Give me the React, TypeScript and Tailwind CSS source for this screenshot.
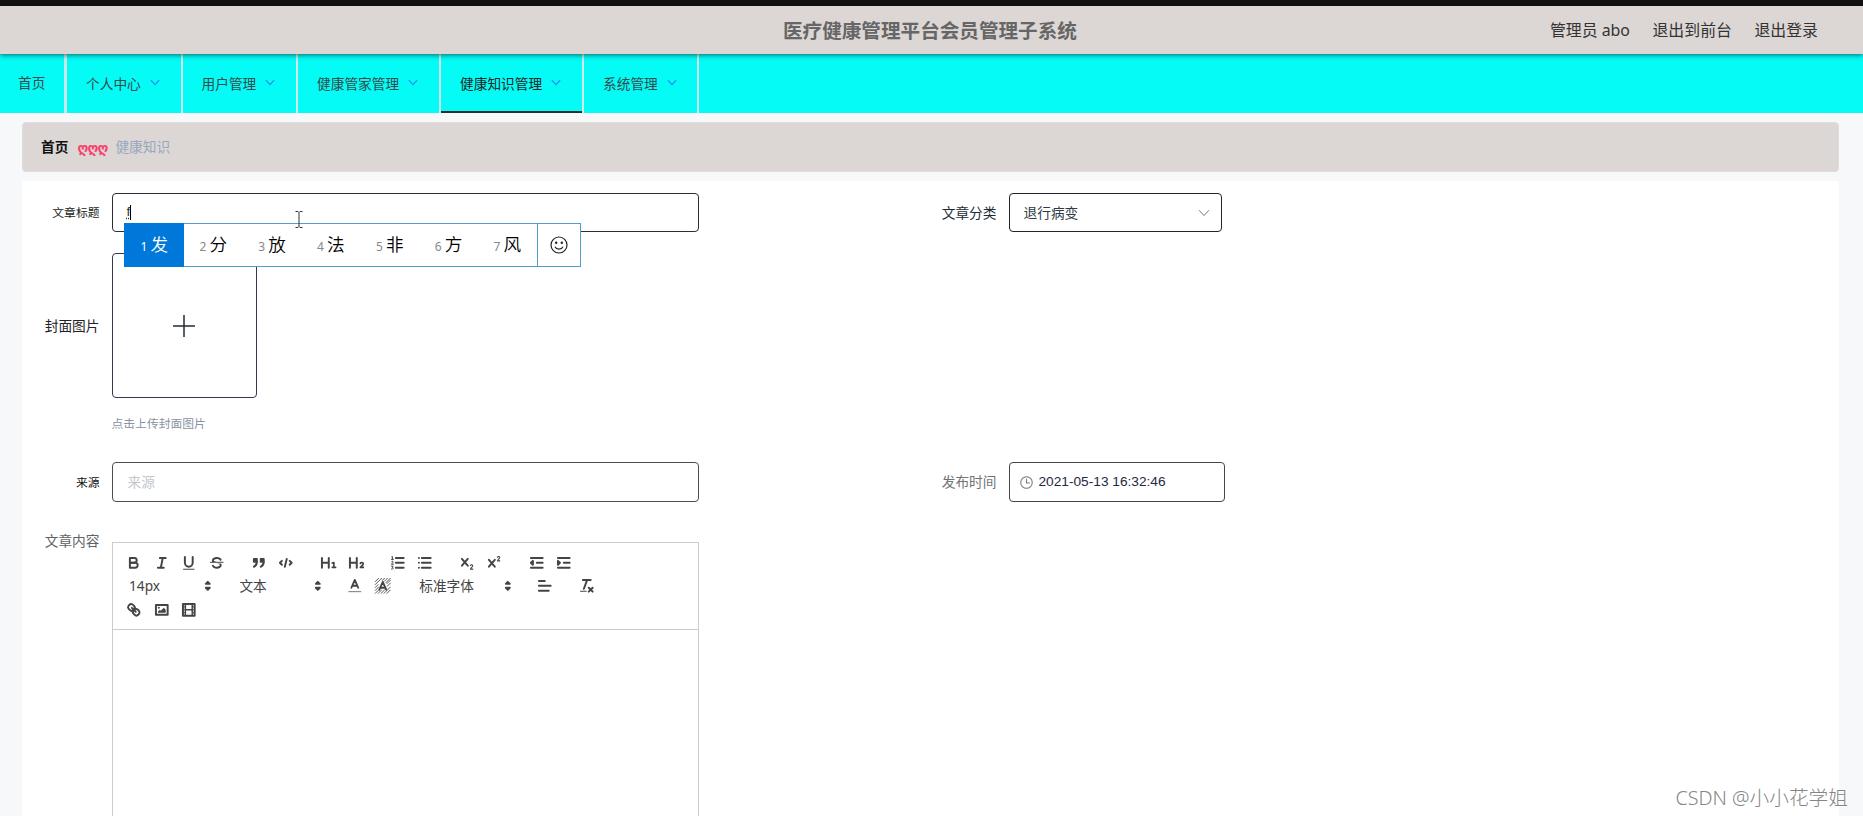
import type { ReactNode } from 'react';
import clsx from 'clsx';

const navItems = [
  { label: '个人中心', width: 'w-[115.5px]' },
  { label: '用户管理', width: 'w-[115.5px]' },
  { label: '健康管家管理', width: 'w-[143px]' },
  { label: '健康知识管理', width: 'w-[143px]', active: true },
  { label: '系统管理', width: 'w-[115px]' },
];

const candidates = ['发', '分', '放', '法', '非', '方', '风'];

function Chevron({ className }: { className?: string }) {
  return (
    <svg viewBox="0 0 12 8" fill="none" stroke="currentColor" className={className}>
      <path d="M1 1.2 6 6.6 11 1.2" />
    </svg>
  );
}

function Header() {
  return (
    <header className="relative z-10 flex h-12 items-center bg-[#dcd6d5] pt-[2px] shadow-[0_1px_5px_rgba(0,0,0,0.6)]">
      <h1 className="ml-[783px] text-[19.6px] font-bold leading-none text-[#666]">医疗健康管理平台会员管理子系统</h1>
      <div className="flex flex-1 justify-end gap-[22.5px] pr-[45px] text-[15.9px] leading-none text-[#333]">
        <span>管理员 abo</span>
        <span>退出到前台</span>
        <span>退出登录</span>
      </div>
    </header>
  );
}

function Nav() {
  return (
    <nav className="flex h-[59px] bg-[#05fbf6] text-[13.7px] text-[#334a4c]">
      <div className="flex w-[67px] items-center border-r-3 border-[#c4e8e6] pl-[18px]">首页</div>
      {navItems.map((item) => (
        <div key={item.label} className={clsx('flex shrink-0 border-r-2 border-[#cdeae8]', item.width)}>
          <div
            className={clsx(
              'flex flex-1 items-center border-b-2 pl-[19px] whitespace-nowrap',
              item.active ? 'border-[#24302f] text-[#1c2626]' : 'border-transparent',
            )}
          >
            <span className="pt-[4px]">{item.label}</span>
            <Chevron className="ml-[9px] h-[7px] w-[10px] stroke-[1.5] text-[#1f8df0]" />
          </div>
        </div>
      ))}
    </nav>
  );
}

function Breadcrumb() {
  return (
    <div className="mt-[9px] flex h-[50px] items-center rounded-[4px] border border-[#e0dcdd] bg-[#dcd6d5] pl-[18.5px] text-[13.7px] leading-none">
      <span className="font-bold text-[#111]">首页</span>
      <span className="ml-[9px] w-[30px] pt-[4px] font-['DejaVu_Sans'] text-[13.3px] font-bold tracking-[-0.8px] whitespace-nowrap text-[#f5416c]">ღღღ</span>
      <span className="ml-[8px] text-[#97a8be]">健康知识</span>
    </div>
  );
}

function Label({ children, className }: { children: ReactNode; className?: string }) {
  return <label className={clsx('shrink-0 pr-3 text-right leading-none', className)}>{children}</label>;
}

function Icon({ children }: { children: ReactNode }) {
  return (
    <span className="flex h-[23.5px] w-[27.4px] items-center justify-center">
      <svg
        viewBox="0 0 18 18"
        className="size-[17.6px]"
        fill="none"
        stroke="#444"
        strokeWidth="2"
        strokeLinecap="round"
        strokeLinejoin="round"
      >
        {children}
      </svg>
    </span>
  );
}

function Group({ children }: { children: ReactNode }) {
  return <span className="mr-[14.7px] flex">{children}</span>;
}

function Picker({ children, className }: { children: ReactNode; className: string }) {
  return (
    <span className={clsx('mr-[14.7px] flex h-[23.5px] items-center justify-between pl-[8.5px] text-[13.7px] leading-none text-[#444]', className)}>
      {children}
      <svg viewBox="0 0 18 18" className="size-[17.6px]" fill="#444" stroke="#444" strokeWidth="2" strokeLinejoin="round">
        <polygon points="7 11 9 13 11 11 7 11" />
        <polygon points="7 7 9 5 11 7 7 7" />
      </svg>
    </span>
  );
}

function Toolbar() {
  return (
    <div className="h-[87px] border-b border-[#ccc] pt-[8px] pl-2">
      <div className="flex">
        <Group>
          <Icon>
            <path d="M5,4H9.5A2.5,2.5,0,0,1,12,6.5v0A2.5,2.5,0,0,1,9.5,9H5A0,0,0,0,1,5,9V4A0,0,0,0,1,5,4Z" />
            <path d="M5,9h5.5A2.5,2.5,0,0,1,13,11.5v0A2.5,2.5,0,0,1,10.5,14H5a0,0,0,0,1,0,0V9A0,0,0,0,1,5,9Z" />
          </Icon>
          <Icon>
            <path d="M7 4H13M5 14H11M8 14 10 4" />
          </Icon>
          <Icon>
            <path d="M5,3V9a4.012,4.012,0,0,0,4,4H9a4.012,4.012,0,0,0,4-4V3" />
            <rect fill="#444" stroke="none" height="1" rx="0.5" width="12" x="3" y="15" />
          </Icon>
          <Icon>
            <path strokeWidth="1" d="M15.5 8.5H2.5" />
            <path fill="#444" stroke="none" d="M9.007,8C6.542,7.791,6,7.519,6,6.5,6,5.792,7.283,5,9,5c1.571,0,2.765.679,2.969,1.309a1,1,0,0,0,1.9-.617C13.356,4.106,11.354,3,9,3,6.2,3,4,4.538,4,6.5a3.2,3.2,0,0,0,.5,1.843Z" />
            <path fill="#444" stroke="none" d="M8.984,10C11.457,10.208,12,10.479,12,11.5c0,0.708-1.283,1.5-3,1.5-1.571,0-2.765-.679-2.969-1.309a1,1,0,1,0-1.9.617C4.644,13.894,6.646,15,9,15c2.8,0,5-1.538,5-3.5a3.2,3.2,0,0,0-.5-1.843Z" />
          </Icon>
        </Group>
        <Group>
          <Icon>
            <rect fill="#444" height="3" width="3" x="4" y="5" />
            <rect fill="#444" height="3" width="3" x="11" y="5" />
            <path fill="#444" d="M7,8c0,4.031-3,5-3,5" />
            <path fill="#444" d="M14,8c0,4.031-3,5-3,5" />
          </Icon>
          <Icon>
            <path d="M5 7 3 9 5 11M13 7 15 9 13 11M10 5 8 13" />
          </Icon>
        </Group>
        <Group>
          <Icon>
            <path d="M3 4V14M10 4V14M10 9H3" />
            <path strokeWidth="1.7" d="M13.6 9.3 15.2 8.7V13.6M13.6 13.7H17" />
          </Icon>
          <Icon>
            <path d="M3 4V14M10 4V14M10 9H3" />
            <path strokeWidth="1.7" d="M13.6 9.6C14 8.3 16.7 8.4 16.6 10 16.5 11.3 14.5 12 13.7 13.7H17" />
          </Icon>
        </Group>
        <Group>
          <Icon>
            <path d="M7 4H15M7 9H15M7 14H15" />
            <path strokeWidth="1" d="M2.5 5.5H4.5M3.5 5.5V2.5L2.8 2.8M2.5 8C3 7 4.5 7.3 4.3 8.3L2.5 10.5H4.5M2.5 12.5H4.2L3.5 13.9C5 14 4.8 15.7 2.5 15.4" />
          </Icon>
          <Icon>
            <path d="M6 4H15M6 9H15M6 14H15M3 4H3M3 9H3M3 14H3" />
          </Icon>
        </Group>
        <Group>
          <Icon>
            <path d="M4 5 10 12M10 5 4 12" />
            <path strokeWidth="1.1" d="M12.7 11.8C13.2 10.5 15.2 10.9 15 12.2 14.9 13.3 13.2 14 12.7 15.5H15.2" />
          </Icon>
          <Icon>
            <path d="M4 6 10 13M10 6 4 13" />
            <path strokeWidth="1.1" d="M12.7 3.3C13.2 2 15.2 2.4 15 3.7 14.9 4.8 13.2 5.5 12.7 7H15.2" />
          </Icon>
        </Group>
        <Group>
          <Icon>
            <path d="M3 14H15M3 4H15M9 9H15" />
            <path fill="#444" d="M5 7V11L3 9Z" />
          </Icon>
          <Icon>
            <path d="M3 14H15M3 4H15M9 9H15" />
            <path fill="#444" d="M3 7V11L5 9Z" />
          </Icon>
        </Group>
      </div>
      <div className="flex">
        <Picker className="w-[95.7px] font-['Noto_Sans']">14px</Picker>
        <Picker className="w-[95.7px]">文本</Picker>
        <Group>
          <Icon>
            <path strokeWidth="1" stroke="#777" d="M3 15H15" strokeLinecap="square" />
            <path strokeWidth="1.9" d="M5.5 11 9 3 12.5 11M6.8 9H11.2" />
          </Icon>
          <Icon>
            <path
              strokeWidth="0.9"
              strokeLinecap="butt"
              d="M1 5 5 1M1 8 8 1M1 11 4.5 7.5M8 4 11 1M1 14 5 10M10.5 4.5 14 1M1 17 5 13M12 6 17 1M4 17 8 13M13 7 17 3M7 17 11 13M13.5 9.5 17 6M10 17 17 10M13 17 17 13"
            />
            <path strokeWidth="1.9" d="M5.5 13 9 5 12.5 13M6.8 11H11.2" />
          </Icon>
        </Group>
        <Picker className="w-[105.5px]">标准字体</Picker>
        <Group>
          <Icon>
            <path d="M3 9H15M3 14H13M3 4H9" />
          </Icon>
        </Group>
        <Icon>
          <path d="M5 3H13M6 12 9.4 3M11 11 15 15M15 11 11 15" />
          <rect fill="#444" stroke="none" height="1" rx="0.5" width="7" x="2" y="14" />
        </Icon>
      </div>
      <div className="flex">
        <Icon>
          <path d="M7 7 11 11" />
          <path d="M8.9,4.577a3.476,3.476,0,0,1,.36,4.679A3.476,3.476,0,0,1,4.577,8.9C3.185,7.5,2.035,6.4,4.217,4.217S7.5,3.185,8.9,4.577Z" />
          <path d="M13.423,9.1a3.476,3.476,0,0,0-4.679-.36,3.476,3.476,0,0,0,.36,4.679c1.392,1.392,2.5,2.542,4.679.36S14.815,10.5,13.423,9.1Z" />
        </Icon>
        <Icon>
          <rect height="10" width="12" x="3" y="4" />
          <circle fill="#444" stroke="none" cx="6" cy="7" r="1" />
          <path fill="#444" stroke="none" d="M5 12V11L7 9 8 10 11 7 13 9V12Z" />
        </Icon>
        <Icon>
          <rect height="12" width="12" x="3" y="3" />
          <path strokeLinecap="butt" d="M5.5 3V15M12.5 3V15M6 9H12" strokeWidth="1.5" />
          <path strokeLinecap="butt" strokeWidth="1" d="M3 6H5.5M3 9H5.5M3 12H5.5M12.5 6H15M12.5 9H15M12.5 12H15" />
        </Icon>
      </div>
    </div>
  );
}

// Pinyin candidate window floating under the title field
function CandidateBar() {
  return (
    <div className="absolute top-[29px] left-[11px] z-20 flex h-[44px] w-[457px] border border-[#4f9fc6] bg-white">
      {candidates.map((char, i) => (
        <div
          key={char}
          className={clsx(
            'flex shrink-0 items-center leading-none',
            i === 0 ? '-my-px -ml-px w-[60px] bg-[#0078d9] pl-[17px] text-white' : 'w-[58.8px] pl-[16px] text-black',
          )}
        >
          <span className={clsx("w-[10px] pt-[4px] font-['Noto_Sans'] text-[12px]", i > 0 && 'text-[#888]')}>{i + 1}</span>
          <span className="text-[17.6px] font-[350]">{char}</span>
        </div>
      ))}
      <div className="ml-auto flex w-[43px] items-center justify-center border-l border-[#4f9fc6]">
        <svg viewBox="0 0 18 18" className="size-[18px]" fill="none" stroke="#222" strokeWidth="1.2">
          <circle cx="9" cy="9" r="8" />
          <path d="M5 10.8C6.5 14 11.5 14 13 10.8" />
          <circle cx="6.2" cy="6.7" r="0.6" fill="#222" />
          <circle cx="11.8" cy="6.7" r="0.6" fill="#222" />
        </svg>
      </div>
    </div>
  );
}

function ArticleForm() {
  return (
    <main className="mt-[9px] flex-1 bg-white pt-3 text-[13.7px]">
      <div className="flex h-[39px] items-center">
        <Label className="w-[90px] pt-px text-[11.8px] text-[#222]">文章标题</Label>
        <div className="relative flex h-[39px] w-[587.5px] items-center rounded-[4px] border border-[#2c2c38] pl-[14px]">
          <span className="font-['Liberation_Sans'] text-[#333] underline decoration-dotted underline-offset-2">f</span>
          <span className="h-[15px] w-px bg-black" />
          <svg viewBox="0 0 8 17" className="absolute top-[17px] left-[182px] z-30 h-[17px] w-2" fill="none" stroke="#333">
            <path d="M.5 .5H3L4 1.5 5 .5H7.5M4 1.5V15.5M.5 16.5H3L4 15.5 5 16.5H7.5" />
          </svg>
          <CandidateBar />
        </div>
        <Label className="w-[309.5px] text-[#222b33]">文章分类</Label>
        <div className="flex h-[39px] w-[213px] items-center justify-between rounded-[4px] border border-[#22222c] pr-[11px] pl-[14px] text-[#2f3b45]">
          <span className="pt-[2px]">退行病变</span>
          <Chevron className="h-[8px] w-[12px] text-[#777]" />
        </div>
      </div>

      <div className="mt-[21px] flex h-[145px] items-center">
        <Label className="w-[90px] text-[#222]">封面图片</Label>
        <div className="flex size-[145px] items-center justify-center rounded-[4px] border border-[#33384c]">
          <svg viewBox="0 0 22 22" className="size-[22px]" stroke="#222c30" strokeWidth="1.5">
            <path d="M11 0V22M0 11H22" />
          </svg>
        </div>
      </div>
      <p className="mt-[19px] ml-[90px] text-[11.8px] leading-[12px] text-[#8793a3]">点击上传封面图片</p>

      <div className="mt-[33px] flex h-10 items-center">
        <Label className="w-[90px] pt-px text-[11.8px] text-[#111]">来源</Label>
        <div className="flex h-10 w-[587.5px] items-center rounded-[4px] border border-[#4c4c52] pl-[15px] text-[#c3c7ce]">来源</div>
        <Label className="w-[309.5px] text-[#707276]">发布时间</Label>
        <div className="flex h-10 w-[216px] items-center rounded-[4px] border border-[#44444e] pl-[10px]">
          <svg viewBox="0 0 14 14" className="size-[13px]" fill="none" stroke="#777" strokeWidth="1.1">
            <circle cx="7" cy="7" r="6.2" />
            <path d="M7 3V7.5H10.5" />
          </svg>
          <span className="ml-[6px] pt-px font-['Liberation_Sans'] text-[#1f2940]">2021-05-13 16:32:46</span>
        </div>
      </div>

      <div className="mt-10 flex">
        <Label className="-mt-2 w-[90px] text-[#606266]">文章内容</Label>
        <div className="h-[274px] w-[587.5px] border border-b-0 border-[#ccc]">
          <Toolbar />
        </div>
      </div>
    </main>
  );
}

export default function App() {
  return (
    <div className="relative flex h-[816px] w-[1863px] flex-col overflow-hidden bg-[#f6f8fa] font-['Noto_Sans','Noto_Sans_CJK_SC',sans-serif]">
      <div className="h-[6px] shrink-0 bg-[#111]" />
      <Header />
      <Nav />
      <div className="flex flex-1 flex-col pr-6 pl-[21.5px]">
        <Breadcrumb />
        <ArticleForm />
      </div>
      <div className="absolute right-[15px] bottom-[7px] text-[19.7px] leading-[22px] font-light text-[#858585] [text-shadow:1px_1px_0_white]">
        CSDN @小小花学姐
      </div>
    </div>
  );
}
